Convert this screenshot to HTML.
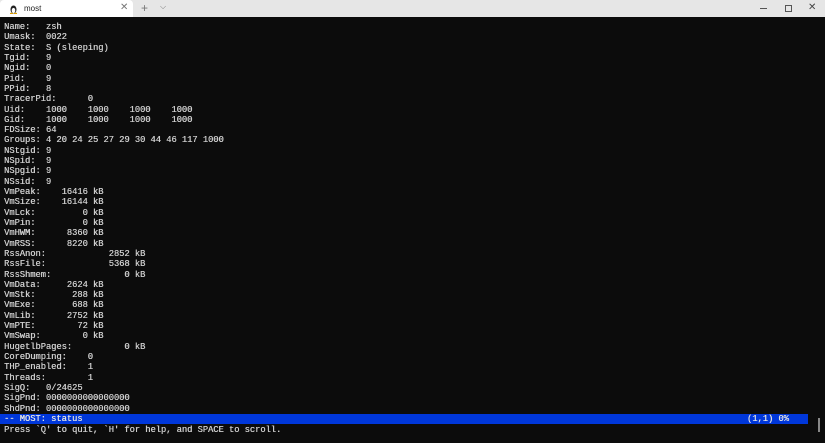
<!DOCTYPE html>
<html><head><meta charset="utf-8"><style>
body{margin:0;width:825px;height:443px;background:#0c0c0c;overflow:hidden;position:relative;font-family:"Liberation Sans",sans-serif}
.bar{position:absolute;left:0;top:0;width:825px;height:17px;background:#e6e6e6}
.tab{position:absolute;left:0;top:0;width:133px;height:17px;background:#fff;border-radius:4px 4px 0 0}
.tab span{position:absolute;left:24px;top:4px;font-size:8px;color:#222}
.x{position:absolute;font-size:10px;color:#777}
pre{position:absolute;left:4px;top:22px;margin:0;font-family:"Liberation Mono",monospace;font-size:8.8px;line-height:10.32px;color:#cccccc;tab-size:8;-moz-tab-size:8;letter-spacing:-0.05px;text-shadow:0.3px 0 0 #cccccc}
.blue{position:absolute;left:0;top:414px;width:808px;height:10px;background:#0037da}
.sb{position:absolute;left:818px;top:418px;width:2px;height:14px;background:#888}
</style></head><body>
<div class="bar">
<div class="tab">
<svg style="position:absolute;left:9px;top:4px" width="9" height="10" viewBox="0 0 9 10"><ellipse cx="4.5" cy="5.5" rx="3" ry="4" fill="#222"/><ellipse cx="4.5" cy="6.5" rx="1.8" ry="2.6" fill="#fff"/><path d="M1 9.5h3M5 9.5h3" stroke="#e0a000" stroke-width="1.2"/></svg>
<span>most</span>
<div class="x" style="left:120px;top:2px">✕</div>
</div>
<div class="x" style="left:141px;top:1px;font-size:12px">+</div>
<div class="x" style="left:160px;top:2px;font-size:8px">⌵</div>
<div style="position:absolute;left:760px;top:8px;width:7px;height:1px;background:#555"></div>
<div style="position:absolute;left:785px;top:5px;width:5px;height:5px;border:1px solid #555"></div>
<div class="x" style="left:808px;top:2px;color:#444">✕</div>
</div>
<pre>Name:	zsh
Umask:	0022
State:	S (sleeping)
Tgid:	9
Ngid:	0
Pid:	9
PPid:	8
TracerPid:	0
Uid:	1000	1000	1000	1000
Gid:	1000	1000	1000	1000
FDSize:	64
Groups:	4 20 24 25 27 29 30 44 46 117 1000
NStgid:	9
NSpid:	9
NSpgid:	9
NSsid:	9
VmPeak:	   16416 kB
VmSize:	   16144 kB
VmLck:	       0 kB
VmPin:	       0 kB
VmHWM:	    8360 kB
VmRSS:	    8220 kB
RssAnon:	    2852 kB
RssFile:	    5368 kB
RssShmem:	       0 kB
VmData:	    2624 kB
VmStk:	     288 kB
VmExe:	     688 kB
VmLib:	    2752 kB
VmPTE:	      72 kB
VmSwap:	       0 kB
HugetlbPages:	       0 kB
CoreDumping:	0
THP_enabled:	1
Threads:	1
SigQ:	0/24625
SigPnd:	0000000000000000
ShdPnd:	0000000000000000
</pre>
<div class="blue"></div>
<pre style="top:414px;color:#e8e8e8">-- MOST: status</pre>
<pre style="top:414px;left:747px;color:#e8e8e8">(1,1) 0%</pre>
<pre style="top:424.5px">Press `Q' to quit, `H' for help, and SPACE to scroll.</pre>
<div class="sb"></div>
</body></html>
